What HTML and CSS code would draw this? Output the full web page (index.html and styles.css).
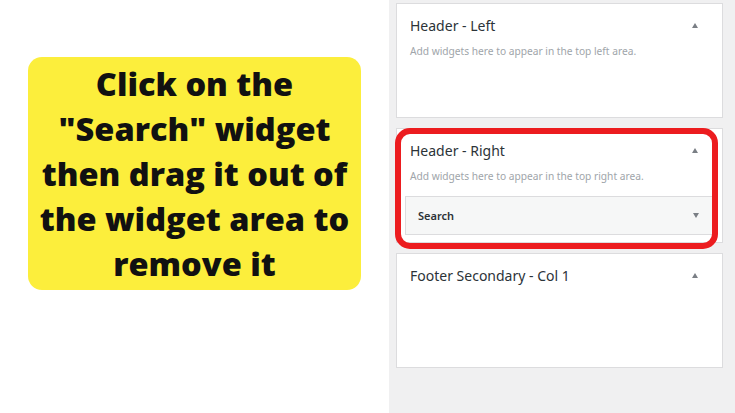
FILE: index.html
```html
<!DOCTYPE html>
<html>
<head>
<meta charset="utf-8">
<link rel="stylesheet" href="styles.css">
</head>
<body>
<div class="page">
  <div class="left">
    <div class="callout">Click on the<br>"Search" widget<br>then drag it out of<br>the widget area to<br>remove it</div>
  </div>
  <div class="panel">
    <div class="card">
      <div class="card-head"><span class="title">Header - Left</span><span class="arrow up"></span></div>
      <div class="desc">Add widgets here to appear in the top left area.</div>
    </div>
    <div class="card highlighted">
      <div class="card-head"><span class="title">Header - Right</span><span class="arrow up"></span></div>
      <div class="desc">Add widgets here to appear in the top right area.</div>
      <div class="widget"><span class="wname">Search</span><span class="arrow down"></span></div>
      <div class="redbox"></div>
    </div>
    <div class="card">
      <div class="card-head"><span class="title">Footer Secondary - Col 1</span><span class="arrow up"></span></div>
    </div>
  </div>
</div>
</body>
</html>
```
FILE: styles.css
```css
html, body {
  margin: 0;
  padding: 0;
  background: #ffffff;
}
.page {
  display: flex;
  width: 735px;
  height: 413px;
  overflow: hidden;
}
.left {
  width: 389px;
  flex: none;
  padding: 57px 0 0 28px;
  box-sizing: border-box;
}
.callout {
  width: 333px;
  height: 233px;
  background: #fcee3c;
  border-radius: 14px;
  display: flex;
  align-items: center;
  justify-content: center;
  text-align: center;
  font-family: "Open Sans", sans-serif;
  font-weight: 800;
  font-size: 32.5px;
  line-height: 45px;
  color: #111111;
  white-space: nowrap;
}
.panel {
  flex: 1;
  background: #f0f0f1;
  padding: 3px 12px 0 7px;
  display: flex;
  flex-direction: column;
  gap: 10px;
}
.card {
  position: relative;
  height: 115px;
  background: #ffffff;
  border: 1px solid #dcdcde;
  box-sizing: border-box;
  font-family: "Noto Sans", "Open Sans", sans-serif;
}
.card-head {
  display: flex;
  justify-content: space-between;
  align-items: center;
  padding: 12px 24px 0 13px;
  height: 19px;
}
.title {
  font-size: 14px;
  color: #2c3338;
}
.arrow {
  width: 0;
  height: 0;
  border-left: 3.5px solid transparent;
  border-right: 3.5px solid transparent;
}
.arrow.up {
  border-bottom: 5px solid #7a7f85;
}
.arrow.down {
  border-top: 5px solid #7a7f85;
}
.desc {
  padding: 9px 0 0 13px;
  font-size: 10.2px;
  color: #a0a5aa;
}
.widget {
  margin: 13px 8px 0 8px;
  height: 39px;
  background: #f6f7f7;
  border: 1px solid #dcdcde;
  box-sizing: border-box;
  display: flex;
  align-items: center;
  justify-content: space-between;
  padding: 0 14px 0 12px;
}
.wname {
  font-size: 11px;
  font-weight: 600;
  color: #2c3338;
}
.redbox {
  position: absolute;
  left: -2px;
  top: -1px;
  width: 323px;
  height: 121px;
  border: 6px solid #ec1c1f;
  border-radius: 15px;
  box-sizing: border-box;
}
```
